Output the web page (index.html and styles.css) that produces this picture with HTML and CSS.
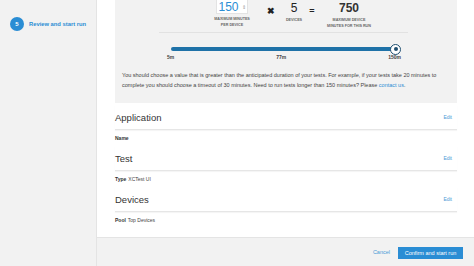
FILE: index.html
```html
<!DOCTYPE html>
<html>
<head>
<meta charset="utf-8">
<link rel="stylesheet" href="styles.css">
</head>
<body>
<div class="sidebar">
  <div class="step">
    <span class="step-num">5</span>
    <span class="step-label">Review and start run</span>
  </div>
</div>
<div class="main">
  <div class="content">
    <div class="settings">
      <div class="calc">
        <div class="calc-item item-input">
          <div class="num-input"><span class="num-val">150</span><span class="spin">&#8661;</span></div>
          <div class="calc-label">Maximum minutes<br>per device</div>
        </div>
        <div class="op times">&#10006;</div>
        <div class="calc-item item-devices">
          <div class="num">5</div>
          <div class="calc-label">Devices</div>
        </div>
        <div class="op eq">=</div>
        <div class="calc-item item-total">
          <div class="num bold">750</div>
          <div class="calc-label">Maximum device<br>minutes for this run</div>
        </div>
      </div>
      <div class="divider"></div>
      <div class="slider">
        <div class="track"><div class="thumb"></div></div>
        <div class="ticks"><span>5m</span><span>77m</span><span>150m</span></div>
      </div>
      <p class="note">You should choose a value that is greater than the anticipated duration of your tests. For example, if your tests take 20 minutes to complete you should choose a timeout of 30 minutes. Need to run tests longer than 150 minutes? Please <span class="link">contact us</span>.</p>
    </div>
    <div class="section-head first"><span class="title">Application</span><span class="edit">Edit</span></div>
    <div class="field"><b>Name</b></div>
    <div class="section-head"><span class="title">Test</span><span class="edit">Edit</span></div>
    <div class="field"><b>Type</b> XCTest UI</div>
    <div class="section-head"><span class="title">Devices</span><span class="edit">Edit</span></div>
    <div class="field"><b>Pool</b> Top Devices</div>
  </div>
  <div class="footer">
    <span class="cancel">Cancel</span>
    <button class="confirm">Confirm and start run</button>
  </div>
</div>
</body>
</html>
```
FILE: styles.css
```css
* { box-sizing: border-box; }
html, body { margin: 0; padding: 0; }
body {
  width: 474px;
  height: 266px;
  overflow: hidden;
  display: flex;
  font-family: "Liberation Sans", Arial, sans-serif;
  color: #333;
  background: #fff;
}
.sidebar {
  width: 97px;
  background: #f2f2f2;
  border-right: 1px solid #e4e4e4;
  padding-top: 17px;
}
.step {
  display: flex;
  align-items: center;
  gap: 5px;
  padding-left: 10px;
}
.step-num {
  width: 14px;
  height: 14px;
  border-radius: 50%;
  background: #2a8dd4;
  color: #fff;
  font-size: 6px;
  font-weight: bold;
  display: flex;
  align-items: center;
  justify-content: center;
}
.step-label {
  color: #2a8dd4;
  font-size: 5.8px;
  font-weight: bold;
}
.main {
  flex: 1;
  display: flex;
  flex-direction: column;
}
.content {
  flex: 1;
  padding: 0 17px 0 18px;
}
.settings {
  background: #f2f2f2;
  height: 103px;
}
.calc {
  display: flex;
  align-items: flex-start;
  justify-content: center;
  height: 30px;
  padding-left: 14px;
}
.calc-item {
  display: flex;
  flex-direction: column;
  align-items: center;
}
.item-input { width: 50px; }
.item-devices { width: 22px; }
.item-total { width: 60px; }
.num-input {
  width: 32px;
  height: 14px;
  background: #fff;
  border: 1px solid #e3e3e3;
  border-top: none;
  display: flex;
  align-items: center;
  justify-content: center;
  gap: 3px;
}
.num-val {
  color: #2a8dd4;
  font-size: 12px;
  line-height: 12px;
}
.spin {
  color: #999;
  font-size: 5px;
}
.num {
  font-size: 12px;
  line-height: 14px;
  color: #222;
  margin-top: 1px;
}
.num.bold { font-weight: bold; color: #333; }
.calc-label {
  margin-top: 2px;
  font-size: 3.7px;
  line-height: 6px;
  font-weight: bold;
  text-transform: uppercase;
  color: #666;
  text-align: center;
  white-space: nowrap;
}
.op {
  font-size: 9px;
  font-weight: bold;
  color: #222;
  padding-top: 6px;
}
.times { width: 24px; text-align: center; margin-left: 2px; }
.eq { width: 14px; text-align: center; }
.divider {
  height: 1px;
  background: #e2e2e2;
  margin: 2px 49px 0 44px;
}
.slider {
  padding: 14px 61px 0 56px;
}
.track {
  position: relative;
  height: 4px;
  border-radius: 2px;
  background: #1f72a8;
}
.thumb {
  position: absolute;
  right: -5px;
  top: -3.5px;
  width: 11px;
  height: 11px;
  border-radius: 50%;
  background: #fff;
  border: 1px solid #1f4f70;
}
.thumb::after {
  content: "";
  position: absolute;
  left: 2.5px;
  top: 2.5px;
  width: 4px;
  height: 4px;
  border-radius: 50%;
  background: #1f4f70;
}
.ticks {
  display: flex;
  justify-content: space-between;
  margin: 3px -5px 0 -4px;
  font-size: 5px;
  font-weight: bold;
  color: #444;
}
.note {
  margin: 10px 6px 0 7px;
  font-size: 5.5px;
  line-height: 10px;
  color: #444;
}
.link { color: #2a8dd4; }
.section-head {
  height: 25px;
  display: flex;
  align-items: center;
  justify-content: space-between;
  border-bottom: 1px solid #e6e6e6;
  box-shadow: 0 1px 1px rgba(0,0,0,0.04);
  padding-right: 5px;
}
.section-head.first { margin-top: 2px; }
.title {
  font-size: 9.5px;
  color: #333;
}
.edit {
  font-size: 5px;
  color: #4a9ad6;
}
.field {
  height: 16px;
  display: flex;
  align-items: center;
  gap: 2px;
  font-size: 5px;
  color: #444;
}
.field b { color: #333; }
.footer {
  height: 29px;
  background: #f2f2f2;
  border-top: 1px solid #e4e4e4;
  display: flex;
  align-items: center;
  justify-content: flex-end;
  gap: 8px;
  padding-right: 11px;
}
.cancel {
  font-size: 5.5px;
  color: #4a9ad6;
}
.confirm {
  height: 12px;
  width: 65px;
  border: none;
  background: #2a8dd4;
  color: #fff;
  font-family: "Liberation Sans", Arial, sans-serif;
  font-size: 5.5px;
  padding: 0;
  margin-top: 2px;
}
```
